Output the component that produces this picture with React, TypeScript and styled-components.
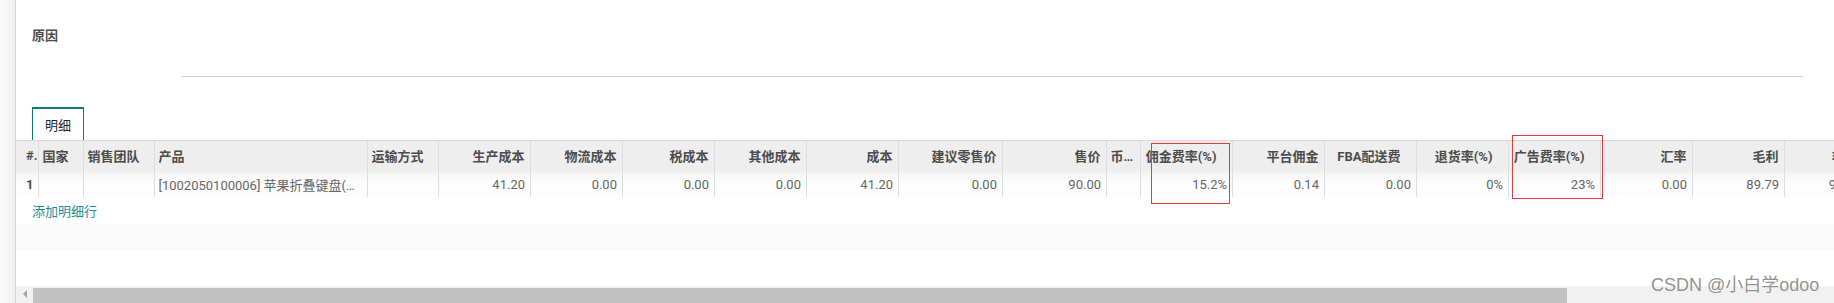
import styled, { createGlobalStyle } from "styled-components";

type Align = "left" | "right";

interface Column {
  label: string;
  width: number;
  align: Align;
  value?: string;
  roomy?: boolean;
}

const columns: Column[] = [
  { label: "国家", width: 45, align: "left" },
  { label: "销售团队", width: 71, align: "left" },
  { label: "产品", width: 213, align: "left", value: "[1002050100006] 苹果折叠键盘(带触控板)" },
  { label: "运输方式", width: 71, align: "left" },
  { label: "生产成本", width: 92, align: "right", value: "41.20" },
  { label: "物流成本", width: 92, align: "right", value: "0.00" },
  { label: "税成本", width: 92, align: "right", value: "0.00" },
  { label: "其他成本", width: 92, align: "right", value: "0.00" },
  { label: "成本", width: 92, align: "right", value: "41.20" },
  { label: "建议零售价", width: 104, align: "right", value: "0.00" },
  { label: "售价", width: 104, align: "right", value: "90.00" },
  { label: "币种", width: 34, align: "left" },
  { label: "佣金费率(%)", width: 92, align: "right", value: "15.2%", roomy: true },
  { label: "平台佣金", width: 92, align: "right", value: "0.14" },
  { label: "FBA配送费", width: 92, align: "right", value: "0.00", roomy: true },
  { label: "退货率(%)", width: 92, align: "right", value: "0%", roomy: true },
  { label: "广告费率(%)", width: 92, align: "right", value: "23%", roomy: true },
  { label: "汇率", width: 92, align: "right", value: "0.00" },
  { label: "毛利", width: 92, align: "right", value: "89.79" },
  { label: "毛利率", width: 92, align: "right", value: "99.77%" },
  { label: "利润", width: 92, align: "right", value: "48.59" },
];

const HANDLE_WIDTH = 22.5;
const tableWidth = columns.reduce((sum, c) => sum + c.width, HANDLE_WIDTH);

const GlobalStyle = createGlobalStyle`
  html, body {
    margin: 0;
    padding: 0;
    background: #ffffff;
    overflow: hidden;
  }
  body {
    font-family: Roboto, "Noto Sans CJK SC", sans-serif;
    font-size: 13px;
    color: #666666;
  }
`;

const Page = styled.div`
  display: flex;
  width: 1834px;
  height: 303px;
  overflow: hidden;
`;

const Gutter = styled.div`
  flex: 0 0 15px;
  background: linear-gradient(to right, #fbfbfb, #efefef);
  border-right: 1px solid #d6d6d6;
`;

const Sheet = styled.div`
  position: relative;
  flex: 1;
  min-width: 0;
  display: flex;
  flex-direction: column;
`;

const ReasonRow = styled.div`
  display: grid;
  grid-template-columns: 150px 1fr;
  padding: 26px 31px 0 16px;
`;

const FieldLabel = styled.div`
  font-weight: bold;
  color: #4c4c4c;
  line-height: 20px;
`;

const FieldInput = styled.div`
  height: 50px;
  border-bottom: 1px solid #cccccc;
`;

const TabBar = styled.div`
  display: flex;
  margin-top: 30px;
  padding-left: 16px;
`;

const Tab = styled.div`
  box-sizing: border-box;
  width: 52px;
  height: 33px;
  display: flex;
  align-items: center;
  justify-content: center;
  border: 1px solid #0d7b70;
  border-top-width: 2px;
  border-bottom: none;
  color: #212529;
  background: #ffffff;
`;

const TableWrap = styled.div`
  width: 100%;
  overflow: hidden;
`;

const Table = styled.table`
  table-layout: fixed;
  border-collapse: separate;
  border-spacing: 0;
`;

const HeadCell = styled.th<{ $align: Align; $roomy?: boolean }>`
  box-sizing: border-box;
  height: 30px;
  padding: 0 ${(p) => (p.$roomy ? 15 : 5)}px 0 4px;
  background: #eeeeee;
  border-top: 1px solid #d9d9d9;
  border-right: 1px solid #dcdde0;
  font-weight: bold;
  color: #4c4c4c;
  text-align: ${(p) => p.$align};
  white-space: nowrap;
  overflow: hidden;
  text-overflow: ellipsis;
`;

const HandleHead = styled(HeadCell)`
  padding: 0 0 0 10px;
  text-overflow: clip;
`;

const BodyCell = styled.td<{ $align: Align }>`
  box-sizing: border-box;
  height: 28px;
  padding: 0 4.5px 0 4px;
  background: linear-gradient(to bottom, #ececec 0, #f8f8f8 5px, #fdfdfd 14px);
  border-right: 1px solid #dcdde0;
  color: #666666;
  text-align: ${(p) => p.$align};
  white-space: nowrap;
  overflow: hidden;
  text-overflow: ellipsis;
`;

const HandleCell = styled(BodyCell)`
  padding: 0 0 0 10px;
  font-weight: bold;
  color: #4c4c4c;
`;

const AddLine = styled.div`
  height: 27px;
  display: flex;
  align-items: center;
  padding-left: 16px;
  color: #1b8f98;
`;

const Band = styled.div`
  height: 27px;
  background: #fafafa;
`;

const Spacer = styled.div`
  height: 36px;
`;

const ScrollBar = styled.div`
  display: flex;
  height: 17px;
  background: #f1f1f1;
`;

const ScrollArrow = styled.div`
  flex: 0 0 17px;
  display: flex;
  align-items: center;
  justify-content: center;
  padding-bottom: 2px;
  &::before {
    content: "";
    border-style: solid;
    border-width: 4px 4px 4px 0;
    border-color: transparent #a3a3a3 transparent transparent;
  }
`;

const ScrollThumb = styled.div`
  width: 1534px;
  margin-top: 2px;
  background: #c1c1c1;
`;

const Mark = styled.div<{ $left: number; $top: number; $w: number; $h: number }>`
  position: absolute;
  left: ${(p) => p.$left}px;
  top: ${(p) => p.$top}px;
  width: ${(p) => p.$w}px;
  height: ${(p) => p.$h}px;
  box-sizing: border-box;
  border: 1.5px solid #e33a3a;
  pointer-events: none;
`;

const Watermark = styled.div`
  position: absolute;
  left: 1635px;
  top: 275px;
  font-family: "Liberation Sans", "Noto Sans CJK SC", sans-serif;
  font-size: 18px;
  line-height: 20px;
  color: rgba(125, 125, 125, 0.85);
  text-shadow: 0 0 1px rgba(255, 255, 255, 0.9);
  white-space: nowrap;
`;

const LinesTable = () => (
  <TableWrap>
    <Table style={{ width: tableWidth }}>
      <colgroup>
        <col style={{ width: HANDLE_WIDTH }} />
        {columns.map((c) => (
          <col key={c.label} style={{ width: c.width }} />
        ))}
      </colgroup>
      <thead>
        <tr>
          <HandleHead $align="left">#.</HandleHead>
          {columns.map((c) => (
            <HeadCell key={c.label} $align={c.align} $roomy={c.roomy}>
              {c.label}
            </HeadCell>
          ))}
        </tr>
      </thead>
      <tbody>
        <tr>
          <HandleCell $align="left">1</HandleCell>
          {columns.map((c) => (
            <BodyCell key={c.label} $align={c.align}>
              {c.value ?? ""}
            </BodyCell>
          ))}
        </tr>
      </tbody>
    </Table>
  </TableWrap>
);

const App = () => {
  return (
    <>
      <GlobalStyle />
      <Page>
        <Gutter />
        <Sheet>
          <ReasonRow>
            <FieldLabel>原因</FieldLabel>
            <FieldInput />
          </ReasonRow>

          <TabBar>
            <Tab>明细</Tab>
          </TabBar>

          <LinesTable />
          <AddLine>添加明细行</AddLine>
          <Band />
          <Spacer />

          <ScrollBar>
            <ScrollArrow />
            <ScrollThumb />
          </ScrollBar>

          <Mark $left={1135} $top={143} $w={79} $h={61} />
          <Mark $left={1496} $top={135} $w={91} $h={64} />
          <Watermark>CSDN @小白学odoo</Watermark>
        </Sheet>
      </Page>
    </>
  );
};

export default App;
